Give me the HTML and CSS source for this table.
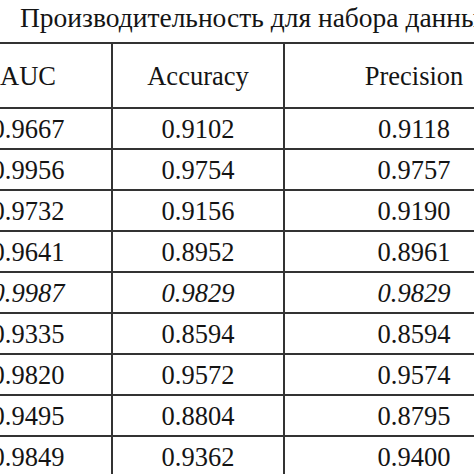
FILE: index.html
```html
<!DOCTYPE html>
<html lang="ru">
<head>
<meta charset="utf-8">
<title>Производительность</title>
<link rel="stylesheet" href="styles.css">
</head>
<body>
<div class="page">
  <div class="caption">Производительность для набора данных</div>
  <table class="results">
    <colgroup>
      <col class="c1"><col class="c2"><col class="c3">
    </colgroup>
    <thead>
      <tr><th>AUC</th><th>Accuracy</th><th>Precision</th></tr>
    </thead>
    <tbody>
      <tr><td>0.9667</td><td>0.9102</td><td>0.9118</td></tr>
      <tr><td>0.9956</td><td>0.9754</td><td>0.9757</td></tr>
      <tr><td>0.9732</td><td>0.9156</td><td>0.9190</td></tr>
      <tr><td>0.9641</td><td>0.8952</td><td>0.8961</td></tr>
      <tr class="em"><td>0.9987</td><td>0.9829</td><td>0.9829</td></tr>
      <tr><td>0.9335</td><td>0.8594</td><td>0.8594</td></tr>
      <tr><td>0.9820</td><td>0.9572</td><td>0.9574</td></tr>
      <tr><td>0.9495</td><td>0.8804</td><td>0.8795</td></tr>
      <tr><td>0.9849</td><td>0.9362</td><td>0.9400</td></tr>
    </tbody>
  </table>
</div>
</body>
</html>
```
FILE: styles.css
```css
html, body {
  margin: 0;
  padding: 0;
  background: #ffffff;
}
body {
  width: 474px;
  height: 474px;
  overflow: hidden;
  font-family: "Liberation Serif", "Times New Roman", serif;
  color: #141414;
}
.page {
  width: 700px;
}
.caption {
  box-sizing: border-box;
  height: 42px;
  padding: 3px 0 0 20px;
  font-size: 27.5px;
  line-height: 30px;
  white-space: nowrap;
}
.results {
  border-collapse: collapse;
  margin-left: -57px;
  table-layout: fixed;
  width: 600px;
}
.c1 { width: 168px; }
.c2 { width: 172px; }
.c3 { width: 260px; }
.results th,
.results td {
  border: 2px solid #333333;
  padding: 0;
  text-align: center;
  font-weight: normal;
  font-size: 26.5px;
  line-height: 30px;
}
.results th {
  height: 63px;
}
.results td {
  height: 39px;
}
.results tr.em td {
  font-style: italic;
}
```
